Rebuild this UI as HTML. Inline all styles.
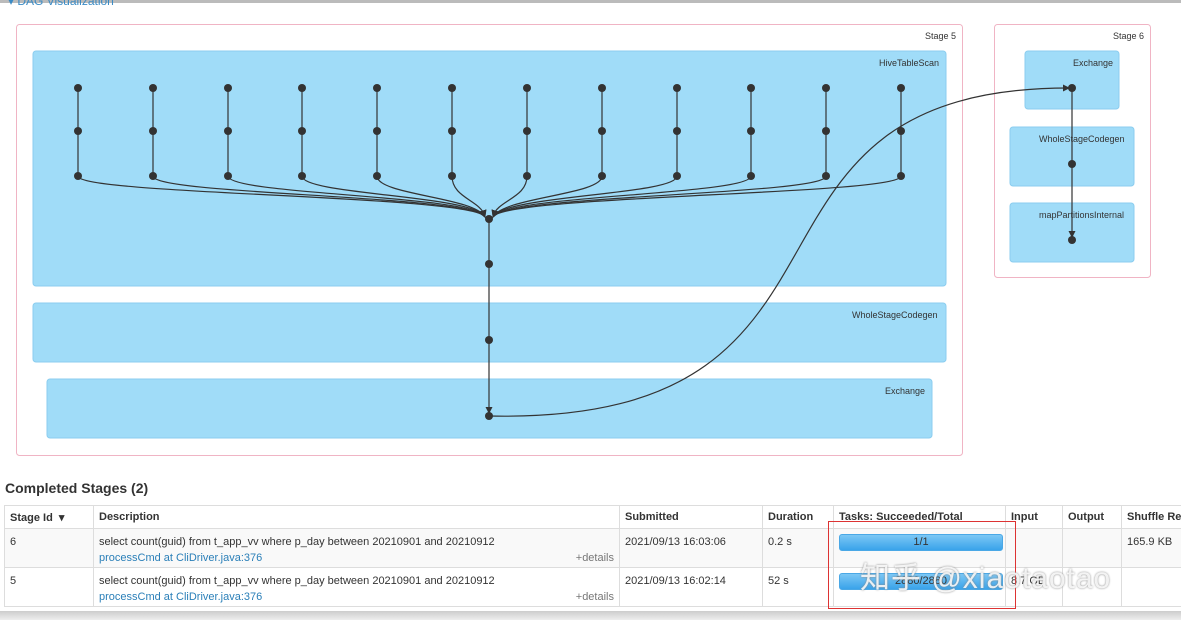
<!DOCTYPE html>
<html><head><meta charset="utf-8"><style>
body{margin:0;width:1181px;height:620px;overflow:hidden;background:#fff;font-family:"Liberation Sans",Arial,sans-serif;position:relative}
.top{position:absolute;left:0;top:0;width:1181px;height:3px;background:#bbb}
.dag{position:absolute;left:8px;top:-6px;color:#3b8bc5;font-size:12px}
h4{position:absolute;left:5px;top:480px;margin:0;font-size:14px;font-weight:bold;color:#333}
table{position:absolute;left:4px;top:505px;border-collapse:collapse;font-size:11px;color:#333;table-layout:fixed;width:1190px}
td,th{border:1px solid #ddd;padding:0 5px;vertical-align:top;text-align:left;white-space:nowrap;overflow:hidden}
th{height:22px;font-weight:bold;vertical-align:middle}
td{height:39px;padding-top:5px;box-sizing:border-box;line-height:16px}
tr.r1 td{background:#f9f9f9}
a{color:#2a7fb8;text-decoration:none}
.det{float:right;color:#777}
.bar{width:162px;height:15px;border-radius:3px;background:linear-gradient(#7cc7f5,#3aa3ea);text-align:center;font-size:11px;line-height:15px;color:#333;border:1px solid #4aa8e6}
.wm{position:absolute;left:860px;top:553px;font-size:30px;color:rgba(255,255,255,.85);font-family:"Liberation Sans","Noto Sans CJK SC",sans-serif;text-shadow:0 0 2px #888;letter-spacing:1px}
.red{position:absolute;left:828px;top:521px;width:186px;height:86px;border:1px solid #d33}
.shadow{position:absolute;left:0;top:611px;width:1181px;height:9px;background:linear-gradient(#ccc,#eee)}
</style></head><body>
<div class="top"></div>
<div class="dag">▾ DAG Visualization</div>
<svg width="1181" height="470" style="position:absolute;left:0;top:0" font-family="Liberation Sans,Arial,sans-serif" font-size="9" fill="#333">
<defs><marker id="m" markerWidth="7" markerHeight="7" refX="6" refY="3.5" orient="auto" markerUnits="userSpaceOnUse"><path d="M0,0L7,3.5L0,7z" fill="#333"/></marker></defs>
<rect x="16.5" y="24.5" width="946" height="431" rx="3" fill="#fff" stroke="#f0b4c4"/>
<text x="925" y="39">Stage 5</text>
<rect x="33" y="51" width="913" height="235" rx="3" fill="#a0dcf8" stroke="#8bcdef"/>
<text x="879" y="66">HiveTableScan</text>
<rect x="33" y="303" width="913" height="59" rx="3" fill="#a0dcf8" stroke="#8bcdef"/>
<text x="852" y="318">WholeStageCodegen</text>
<rect x="47" y="379" width="885" height="59" rx="3" fill="#a0dcf8" stroke="#8bcdef"/>
<text x="885" y="394">Exchange</text>
<rect x="994.5" y="24.5" width="156" height="253" rx="3" fill="#fff" stroke="#f0b4c4"/>
<text x="1113" y="39">Stage 6</text>
<rect x="1025" y="51" width="94" height="58" rx="3" fill="#a0dcf8" stroke="#8bcdef"/>
<text x="1073" y="66">Exchange</text>
<rect x="1010" y="127" width="124" height="59" rx="3" fill="#a0dcf8" stroke="#8bcdef"/>
<text x="1039" y="142">WholeStageCodegen</text>
<rect x="1010" y="203" width="124" height="59" rx="3" fill="#a0dcf8" stroke="#8bcdef"/>
<text x="1039" y="218">mapPartitionsInternal</text>
<g stroke="#333" stroke-width="1.2" fill="none" marker-end="url(#m)">
<path d="M78 88V128M78 131V173M78 176C78 195 475 195 485 217"/>
<path d="M153 88V128M153 131V173M153 176C153 195 475 195 485 217"/>
<path d="M228 88V128M228 131V173M228 176C228 195 475 195 485 217"/>
<path d="M302 88V128M302 131V173M302 176C302 195 475 195 485 217"/>
<path d="M377 88V128M377 131V173M377 176C377 195 475 197 485 217"/>
<path d="M452 88V128M452 131V173M452 176C452 198 480 200 485 216"/>
<path d="M527 88V128M527 131V173M527 176C527 198 498 200 493 216"/>
<path d="M602 88V128M602 131V173M602 176C602 195 503 197 493 217"/>
<path d="M677 88V128M677 131V173M677 176C677 195 503 195 493 217"/>
<path d="M751 88V128M751 131V173M751 176C751 195 503 195 493 217"/>
<path d="M826 88V128M826 131V173M826 176C826 195 503 195 493 217"/>
<path d="M901 88V128M901 131V173M901 176C901 195 503 195 493 217"/>
<path d="M489 218V261M489 264V337M489 340V413"/>
<path d="M489 416C900 425 700 88 1069 88"/>
<path d="M1072 88V161M1072 164V237"/>
</g>
<g fill="#333">
<circle cx="78" cy="88" r="4"/><circle cx="78" cy="131" r="4"/><circle cx="78" cy="176" r="4"/>
<circle cx="153" cy="88" r="4"/><circle cx="153" cy="131" r="4"/><circle cx="153" cy="176" r="4"/>
<circle cx="228" cy="88" r="4"/><circle cx="228" cy="131" r="4"/><circle cx="228" cy="176" r="4"/>
<circle cx="302" cy="88" r="4"/><circle cx="302" cy="131" r="4"/><circle cx="302" cy="176" r="4"/>
<circle cx="377" cy="88" r="4"/><circle cx="377" cy="131" r="4"/><circle cx="377" cy="176" r="4"/>
<circle cx="452" cy="88" r="4"/><circle cx="452" cy="131" r="4"/><circle cx="452" cy="176" r="4"/>
<circle cx="527" cy="88" r="4"/><circle cx="527" cy="131" r="4"/><circle cx="527" cy="176" r="4"/>
<circle cx="602" cy="88" r="4"/><circle cx="602" cy="131" r="4"/><circle cx="602" cy="176" r="4"/>
<circle cx="677" cy="88" r="4"/><circle cx="677" cy="131" r="4"/><circle cx="677" cy="176" r="4"/>
<circle cx="751" cy="88" r="4"/><circle cx="751" cy="131" r="4"/><circle cx="751" cy="176" r="4"/>
<circle cx="826" cy="88" r="4"/><circle cx="826" cy="131" r="4"/><circle cx="826" cy="176" r="4"/>
<circle cx="901" cy="88" r="4"/><circle cx="901" cy="131" r="4"/><circle cx="901" cy="176" r="4"/>
<circle cx="489" cy="219" r="4"/><circle cx="489" cy="264" r="4"/><circle cx="489" cy="340" r="4"/><circle cx="489" cy="416" r="4"/>
<circle cx="1072" cy="88" r="4"/><circle cx="1072" cy="164" r="4"/><circle cx="1072" cy="240" r="4"/>
</g>
</svg>
<h4>Completed Stages (2)</h4>
<table>
<colgroup><col style="width:89px"><col style="width:526px"><col style="width:143px"><col style="width:71px"><col style="width:172px"><col style="width:57px"><col style="width:59px"><col style="width:73px"></colgroup>
<tr><th>Stage Id &nbsp;▾</th><th>Description</th><th>Submitted</th><th>Duration</th><th>Tasks: Succeeded/Total</th><th>Input</th><th>Output</th><th>Shuffle Re</th></tr>
<tr class="r1"><td>6</td><td>select count(guid) from t_app_vv where p_day between 20210901 and 20210912<br><a>processCmd at CliDriver.java:376</a><span class="det">+details</span></td><td>2021/09/13 16:03:06</td><td>0.2 s</td><td><div class="bar">1/1</div></td><td></td><td></td><td>165.9 KB</td></tr>
<tr><td>5</td><td>select count(guid) from t_app_vv where p_day between 20210901 and 20210912<br><a>processCmd at CliDriver.java:376</a><span class="det">+details</span></td><td>2021/09/13 16:02:14</td><td>52 s</td><td><div class="bar">2880/2880</div></td><td>8.7 GB</td><td></td><td></td></tr>
</table>
<div class="red"></div>
<div class="wm">知乎 @xiaotaotao</div>
<div class="shadow"></div>
</body></html>
